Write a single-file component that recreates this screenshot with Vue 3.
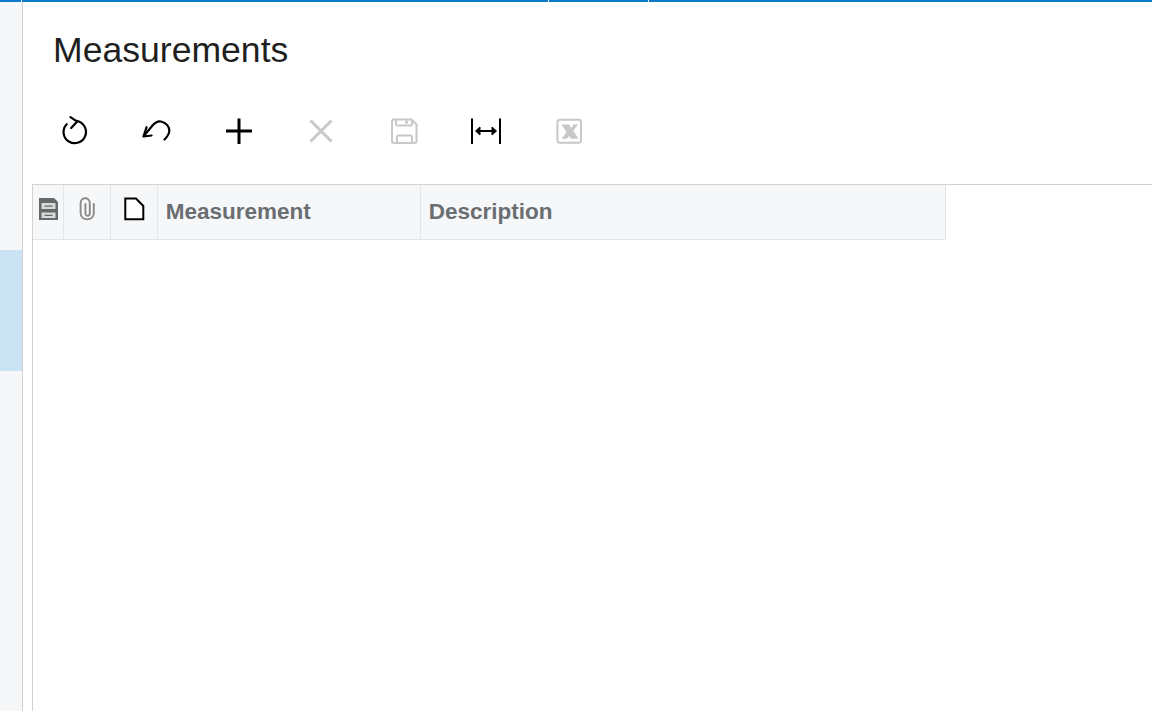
<script setup>
const topSegments = [
  { w: 21, gap: true },
  { w: 526, gap: true },
  { w: 99, gap: true },
  { w: 503, gap: false }
]
const columns = [
  { key: 'files', w: 31, icon: 'cabinet' },
  { key: 'clip', w: 47, icon: 'clip' },
  { key: 'note', w: 47, icon: 'note' },
  { key: 'm', w: 263, label: 'Measurement' },
  { key: 'd', w: 525, label: 'Description' }
]
</script>

<template>
  <div class="page">
    <div class="topbar">
      <span
        v-for="(s, i) in topSegments"
        :key="i"
        class="seg"
        :class="{ gap: s.gap, last: !s.gap }"
        :style="{ width: s.w + 'px' }"
      ></span>
    </div>
    <div class="body">
      <aside class="side">
        <div class="active"></div>
      </aside>
      <main class="main">
        <h1 class="title">Measurements</h1>
        <div class="toolbar">
          <button class="tool">
            <svg width="30" height="30" viewBox="0 0 30 30" fill="none" stroke="#000" stroke-width="2.2" stroke-linecap="round" stroke-linejoin="round">
              <path d="M7.7 8.2 A11.2 11.2 0 1 0 17.4 4.9" />
              <path d="M11.5 1.2 L18.2 5.6 L12.2 12" />
            </svg>
          </button>
          <button class="tool">
            <svg width="30" height="30" viewBox="0 0 30 30" fill="none" stroke="#000" stroke-width="2.2" stroke-linecap="round" stroke-linejoin="round">
              <path d="M1.8 20 L10.5 9.5 C13.5 6 16.5 5 19 5.5 C24.5 6.5 27.5 11 27.3 15 C27.1 18.5 24.5 21.5 22.5 23.5" />
              <path d="M4.6 11.2 L1.5 20.5 L9.6 19.5" />
            </svg>
          </button>
          <button class="tool">
            <svg width="30" height="30" viewBox="0 0 30 30" fill="none" stroke="#000" stroke-width="3">
              <path d="M15 2.5 V28 M2 15 H28" />
            </svg>
          </button>
          <button class="tool">
            <svg width="30" height="30" viewBox="0 0 30 30" fill="none" stroke="#c8c8c8" stroke-width="3">
              <path d="M4.5 4.5 L25.5 25.5 M25.5 4.5 L4.5 25.5" />
            </svg>
          </button>
          <button class="tool">
            <svg width="30" height="30" viewBox="0 0 30 30" fill="none" stroke="#c8c8c8" stroke-width="2">
              <path d="M5 3.5 H22.5 L27.5 8.5 V25 Q27.5 27 25.5 27 H5 Q3 27 3 25 V5.5 Q3 3.5 5 3.5 Z" />
              <path d="M7 4 V8 Q7 9.5 8.5 9.5 H21.5 Q23 9.5 23 8 V4" />
              <path d="M8 27 V21 Q8 19.5 9.5 19.5 H21.5 Q23 19.5 23 21 V27" />
              <path d="M17.5 4.5 V7.5" stroke-width="3" />
            </svg>
          </button>
          <button class="tool">
            <svg width="32" height="30" viewBox="0 0 32 30" fill="none" stroke="#000" stroke-width="2">
              <path d="M2 2.5 V28 M30 2.5 V28" />
              <path d="M7 15 H25" />
              <path d="M10 11 L5.5 15 L10 19 Z M22 11 L26.5 15 L22 19 Z" fill="#000" stroke-width="1" />
            </svg>
          </button>
          <button class="tool">
            <svg width="30" height="30" viewBox="0 0 30 30" fill="none">
              <rect x="3.4" y="3.8" width="23.6" height="23" rx="2.5" stroke="#c8c8c8" stroke-width="2" />
              <path d="M7.5 8.5 H15 L24.7 22.8 H17 Z" fill="#c8c8c8" />
              <path d="M19.5 8.5 H24.2 L13 22.8 H7.7 L12.5 16 L14 18 Z" fill="#c8c8c8" />
            </svg>
          </button>
        </div>
        <section class="grid">
          <div class="head">
            <div
              v-for="c in columns"
              :key="c.key"
              class="cell"
              :style="{ width: c.w + 'px' }"
            >
              <svg v-if="c.icon === 'cabinet'" class="ic" width="22" height="26" viewBox="0 0 22 26">
                <path d="M2 1 H17 L21 5 V23 H2 Z" fill="#666869" />
                <path d="M4.5 6 H18.5 V12 H4.5 Z M4.5 15.5 H18.5 V21 H4.5 Z" fill="#d9dadb" />
                <path d="M7.5 8.5 H15.5 V9.7 H7.5 Z M7.5 17.8 H15.5 V19 H7.5 Z" fill="#666869" />
              </svg>
              <svg v-else-if="c.icon === 'clip'" class="ic" width="20" height="28" viewBox="0 0 20 28" fill="none" stroke="#8a8a8a" stroke-width="1.9" stroke-linecap="round">
                <path d="M16.8 8 V17 C16.8 25.5 3.6 25.5 3.6 17 V7 C3.6 0.6 12.8 0.6 12.8 7 V17 C12.8 20.8 8.4 20.8 8.4 17 V8" />
              </svg>
              <svg v-else-if="c.icon === 'note'" class="ic" width="22" height="26" viewBox="0 0 22 26" fill="#fff" stroke="#000" stroke-width="2">
                <path d="M2.3 1.5 H13 L20.3 9 V22.3 H2.3 Z" />
              </svg>
              <span v-else class="label">{{ c.label }}</span>
            </div>
          </div>
        </section>
      </main>
    </div>
  </div>
</template>

<style>
html, body { margin: 0; background: #fff; overflow: hidden; }
</style>

<style scoped>
.page {
  width: 1152px;
  height: 711px;
  display: flex;
  flex-direction: column;
  font-family: "Liberation Sans", Arial, sans-serif;
  overflow: hidden;
}
.topbar { display: flex; height: 2px; flex: none; }
.seg { display: block; height: 2px; background: #0a7acb; flex: none; }
.seg.gap { margin-right: 1px; }
.seg.last { flex: 1; }
.body { display: flex; flex: 1; min-height: 0; }
.side {
  width: 22px;
  flex: none;
  background: #f5f7f9;
  border-right: 1px solid #cfd0d2;
  padding-top: 248px;
}
.active { height: 121px; background: #cbe4f4; }
.main { flex: 1; min-width: 0; padding: 0 0 0 9px; display: flex; flex-direction: column; }
.title {
  margin: 0;
  padding: 28px 0 0 21px;
  font-size: 35.6px;
  line-height: 41px;
  font-weight: 400;
  color: #1f1f1f;
}
.toolbar { display: flex; margin-top: 37px; padding-left: 1px; height: 45px; }
.tool {
  width: 82.4px;
  height: 45px;
  padding: 0;
  border: 0;
  background: transparent;
  display: flex;
  align-items: center;
  justify-content: center;
  flex: none;
}
.tool svg { display: block; }
.grid {
  flex: 1;
  margin-top: 31px;
  border-top: 1px solid #d2d2d2;
  border-left: 1px solid #d2d2d2;
}
.head { display: flex; height: 55px; }
.cell {
  flex: none;
  box-sizing: border-box;
  height: 55px;
  background: #f5f7f9;
  border-right: 1px solid #e3e5e8;
  border-bottom: 1px solid #e3e5e8;
  display: flex;
  align-items: center;
  justify-content: center;
}
.label {
  flex: 1;
  padding: 0 0 0 7.7px;
  font-size: 22.5px;
  font-weight: 700;
  color: #6b6e70;
  line-height: 52px;
}
.ic { display: block; margin-top: -5px; flex: none; }
</style>
